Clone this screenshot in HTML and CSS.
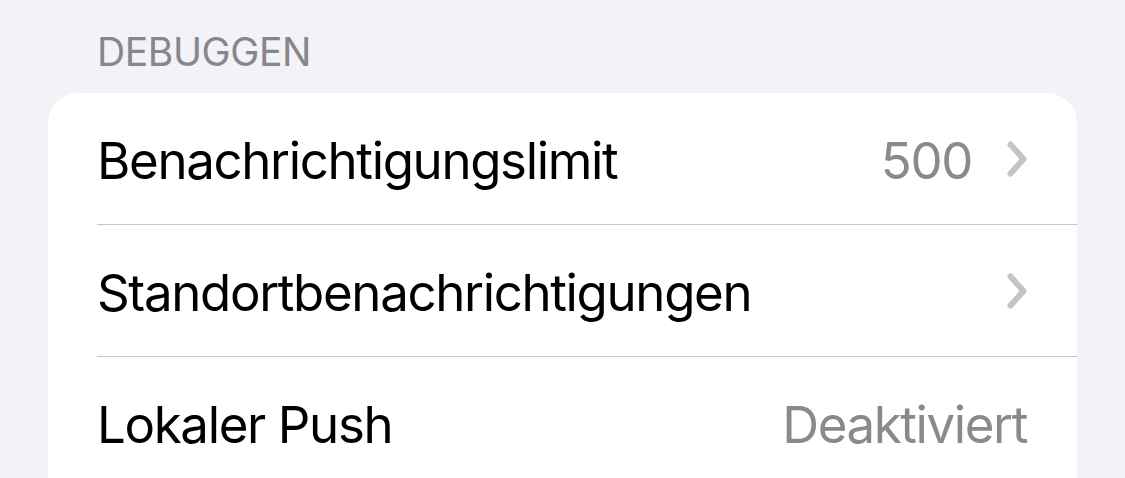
FILE: index.html
```html
<!DOCTYPE html>
<html lang="de">
  <head>
    <meta charset="UTF-8" />
    <meta name="viewport" content="width=device-width, initial-scale=1.0" />
    <title>Debuggen</title>
    <link rel="stylesheet" href="styles.css">
  </head>
  <body>
    <section class="group">
      <h2 class="group-title">DEBUGGEN</h2>
      <div class="card">
        <div class="row">
          <div class="row-inner">
            <span class="label">Benachrichtigungslimit</span>
            <span class="value">500</span>
            <svg class="chevron" width="20" height="36" viewBox="0 0 20 36">
              <polyline points="3.5,3.5 16.5,18 3.5,32.5" />
            </svg>
          </div>
        </div>
        <div class="row">
          <div class="row-inner">
            <span class="label">Standortbenachrichtigungen</span>
            <svg class="chevron" width="20" height="36" viewBox="0 0 20 36">
              <polyline points="3.5,3.5 16.5,18 3.5,32.5" />
            </svg>
          </div>
        </div>
        <div class="row">
          <div class="row-inner">
            <span class="label">Lokaler Push</span>
            <span class="value">Deaktiviert</span>
          </div>
        </div>
      </div>
    </section>
  </body>
</html>
```

FILE: styles.css
```css
body {
  margin: 0;
  padding: 0;
  background: #f2f2f7;
  font-family: Inter, "Noto Sans", "Liberation Sans", sans-serif;
  overflow: hidden;
}

.group {
  padding: 0 48px;
}

.group-title {
  margin: 0;
  padding: 29px 0 0 49px;
  height: 93px;
  box-sizing: border-box;
  font-size: 39px;
  line-height: 46px;
  font-weight: 400;
  color: #86868b;
  letter-spacing: -0.4px;
}

/* card runs on below the visible area, so only the top is rounded */
.card {
  background: #fff;
  border-radius: 30px 30px 0 0;
  height: 385px;
  overflow: hidden;
}

.row {
  padding-left: 49px;
}

.row-inner {
  display: flex;
  align-items: center;
  height: 131px;
  padding-right: 50px;
  border-bottom: 1px solid #c6c6c8;
}

.row:last-child .row-inner {
  border-bottom: none;
}

.label {
  flex: 1;
  font-size: 51px;
  color: #000;
  letter-spacing: -1.35px;
  padding-top: 4px;
}

.value {
  font-size: 51px;
  color: #8a8a8e;
  letter-spacing: -1.4px;
  padding-top: 4px;
}

.chevron {
  margin-left: 35px;
  fill: none;
  stroke: #c4c4c7;
  stroke-width: 6;
  stroke-linecap: round;
  stroke-linejoin: round;
}
```
